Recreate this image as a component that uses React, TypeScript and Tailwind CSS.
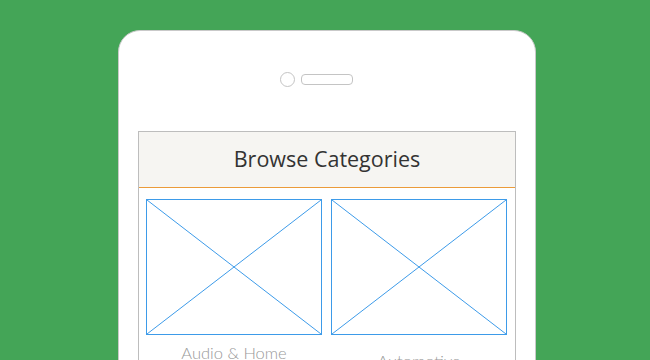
import React from 'react';

function Placeholder() {
  return (
    <div className="h-[136px] border border-[#3d9be9]">
      <svg className="block h-full w-full" viewBox="0 0 100 100" preserveAspectRatio="none">
        <line x1="0" y1="0" x2="100" y2="100" stroke="#3d9be9" strokeWidth="1" vectorEffect="non-scaling-stroke" />
        <line x1="100" y1="0" x2="0" y2="100" stroke="#3d9be9" strokeWidth="1" vectorEffect="non-scaling-stroke" />
      </svg>
    </div>
  );
}

export default function App() {
  return (
    <div className="h-[360px] w-[650px] overflow-hidden bg-[#44a557] pt-[30px] pl-[118px]" style={{ fontFamily: 'Lato, "Open Sans", sans-serif' }}>
      {/* phone body */}
      <div className="h-[400px] w-[418px] rounded-t-[22px] border border-[#c9c9c9] bg-white px-[19px]">
        <div className="flex items-center pt-[41px] pl-[142px]">
          <div className="h-[15px] w-[15px] rounded-full border border-[#c4c4c4]" />
          <div className="ml-[6px] h-[11px] w-[52px] rounded-[4px] border border-[#c4c4c4]" />
        </div>

        {/* screen */}
        <div className="mt-[44px] border border-[#bdbdbd]">
          <div className="flex h-[56px] items-center justify-center border-b border-[#eb9b3a] bg-[#f6f5f2] pb-[1px]">
            <span className="text-[21.5px] text-[#333]" style={{ fontFamily: '"Open Sans", Lato, sans-serif' }}>Browse Categories</span>
          </div>
          <div className="grid grid-cols-2 gap-[9px] pl-[7px] pr-[8px] pt-[11px]">
            <div>
              <Placeholder />
              <div className="mt-[6px] text-center text-[16.5px] font-light text-[#999]">Audio &amp; Home</div>
            </div>
            <div>
              <Placeholder />
              <div className="mt-[14px] text-center text-[16.5px] font-light text-[#999]">Automotive</div>
            </div>
          </div>
        </div>
      </div>
    </div>
  );
}
